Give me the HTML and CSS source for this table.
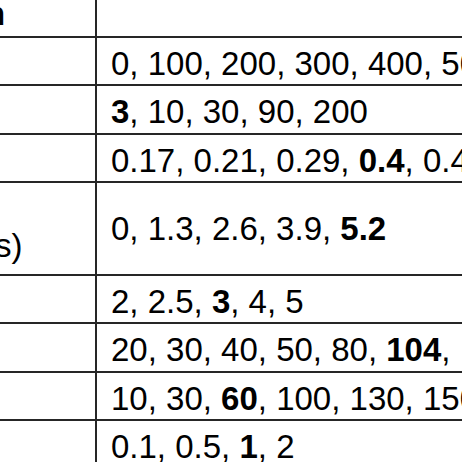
FILE: index.html
```html
<!DOCTYPE html>
<html>
<head>
<meta charset="utf-8">
<link rel="stylesheet" href="styles.css">
</head>
<body>
<div class="sheet">
  <div class="grid">
    <div class="cell name head"><span class="frag frag-n">n</span></div>
    <div class="cell vals head"></div>

    <div class="cell name"></div>
    <div class="cell vals">0, 100, 200, 300, 400, 500</div>

    <div class="cell name"></div>
    <div class="cell vals"><b>3</b>, 10, 30, 90, 200</div>

    <div class="cell name"></div>
    <div class="cell vals">0.17, 0.21, 0.29, <b>0.4</b>, 0.45</div>

    <div class="cell name"><br><span class="frag frag-s">s)</span></div>
    <div class="cell vals mid"><span>0, 1.3, 2.6, 3.9, <b>5.2</b></span></div>

    <div class="cell name"></div>
    <div class="cell vals">2, 2.5, <b>3</b>, 4, 5</div>

    <div class="cell name"></div>
    <div class="cell vals">20, 30, 40, 50, 80, <b>104</b>,</div>

    <div class="cell name"></div>
    <div class="cell vals">10, 30, <b>60</b>, 100, 130, 150</div>

    <div class="cell name last"></div>
    <div class="cell vals last">0.1, 0.5, <b>1</b>, 2</div>
  </div>
</div>
</body>
</html>
```

FILE: styles.css
```css
html, body {
  margin: 0;
  padding: 0;
  background: #ffffff;
}

body {
  width: 462px;
  height: 462px;
  overflow: hidden;
  font-family: "Liberation Sans", Arial, Helvetica, sans-serif;
  font-size: 33px;
  line-height: 37px;
  color: #000000;
}

.sheet {
  margin-top: -12px;
}

.grid {
  display: grid;
  grid-template-columns: 95px 1fr;
  grid-template-rows: 50px 48px 49px 48px 93px 48px 49px 48px 60px;
}

.cell {
  border-bottom: 2px solid #262626;
  padding-top: 7px;
  white-space: nowrap;
  overflow: hidden;
  box-sizing: border-box;
}

.cell.last {
  border-bottom: none;
}

.vals {
  border-left: 2px solid #262626;
  padding-left: 14px;
}

.vals.mid {
  padding-top: 0;
  display: flex;
  align-items: center;
}

.head {
  font-weight: bold;
}

.frag {
  display: inline-block;
}

.frag-n {
  margin-left: -15px;
}

.frag-s {
  margin-left: -5px;
}

b {
  font-weight: bold;
}
```
